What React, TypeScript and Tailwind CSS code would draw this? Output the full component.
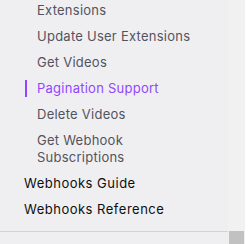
const nested = [
  { label: 'Extensions' },
  { label: 'Update User Extensions' },
  { label: 'Get Videos' },
  { label: 'Pagination Support', active: true },
  { label: 'Delete Videos' },
  { label: 'Get Webhook Subscriptions' },
];

const topLevel = ['Webhooks Guide', 'Webhooks Reference'];

export default function App() {
  return (
    <div className="flex h-[244px] w-[248px] bg-white overflow-hidden" style={{ fontFamily: 'Inter, "Noto Sans", sans-serif' }}>
      {/* Sidebar */}
      <div className="flex w-[228px] flex-col bg-[#efeff1]">
        <nav className="flex flex-col gap-[9px] pt-[1.5px] text-[13px] leading-[17px]">
          {nested.map((item) => (
            <a
              key={item.label}
              href="#"
              className={`relative block w-[197px] pl-[37px] tracking-[0.25px] ${item.active ? 'text-[#9147ff]' : 'text-[#53535f]'}`}
            >
              {item.active && (
                <span className="absolute left-[25px] top-0 h-full w-[2px] bg-[#9147ff]" />
              )}
              {item.label}
            </a>
          ))}
          {topLevel.map((label) => (
            <a key={label} href="#" className="block pl-[24px] tracking-[0.5px] text-[#0e0e10]">
              {label}
            </a>
          ))}
        </nav>
        <div className="mt-auto h-[13px] border-t border-[#d3d3d6]" />
      </div>

      {/* Scrollbar */}
      <div className="flex w-[17px] flex-col justify-end bg-[#f1f1f1]">
        <div className="mx-auto h-[13px] w-[15px] bg-[#c1c1c1]" />
      </div>
    </div>
  );
}
